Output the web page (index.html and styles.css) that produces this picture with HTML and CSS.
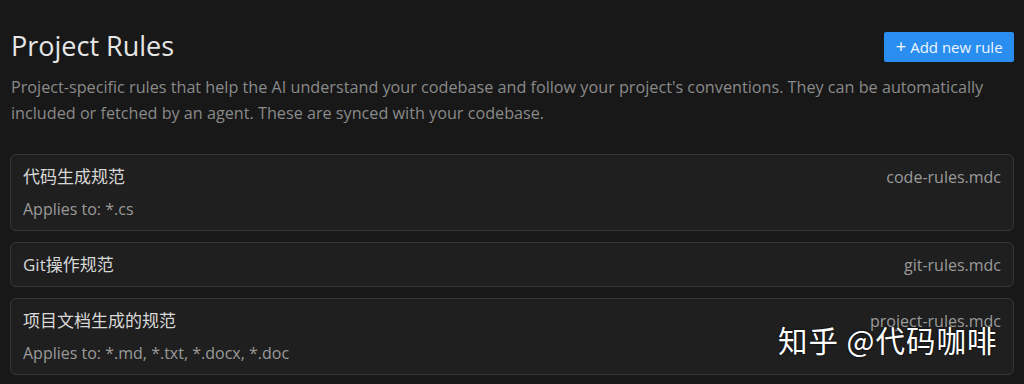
FILE: index.html
```html
<!DOCTYPE html>
<html lang="zh-CN">
<head>
    <meta charset="UTF-8">
    <meta name="viewport" content="width=device-width, initial-scale=1.0">
    <title>Project Rules</title>
    <link rel="stylesheet" href="styles.css">
</head>
<body>
    <div class="page">
        <div class="header">
            <h1>Project Rules</h1>
            <button class="add-btn"><span class="plus">+</span> Add new rule</button>
        </div>
        <p class="desc">Project-specific rules that help the AI understand your codebase and follow your project's conventions. They can be automatically included or fetched by an agent. These are synced with your codebase.</p>

        <div class="rules">
            <div class="rule">
                <div class="rule-top">
                    <span class="rule-name">代码生成规范</span>
                    <span class="rule-file">code-rules.mdc</span>
                </div>
                <div class="rule-glob">Applies to: *.cs</div>
            </div>
            <div class="rule">
                <div class="rule-top">
                    <span class="rule-name">Git操作规范</span>
                    <span class="rule-file">git-rules.mdc</span>
                </div>
            </div>
            <div class="rule">
                <div class="rule-top">
                    <span class="rule-name">项目文档生成的规范</span>
                    <span class="rule-file">project-rules.mdc</span>
                </div>
                <div class="rule-glob">Applies to: *.md, *.txt, *.docx, *.doc</div>
            </div>
        </div>
    </div>

    <!-- 水印 -->
    <div class="watermark">知乎 @代码咖啡</div>
</body>
</html>
```

FILE: styles.css
```css
body {
    margin: 0;
    padding: 0;
    background: #181818;
    font-family: 'Open Sans', 'Noto Sans CJK SC', sans-serif;
    color: #cccccc;
    overflow: hidden;
}
.page {
    padding: 26px 10px 0 10px;
}
.header {
    display: flex;
    justify-content: space-between;
    align-items: center;
}
h1 {
    margin: 0 0 0 1px;
    font-size: 27px;
    font-weight: 400;
    color: #e6e6e6;
    line-height: 40px;
}
.add-btn {
    background: #2a8ef0;
    color: #eef5ff;
    border: none;
    border-radius: 2px;
    height: 30px;
    width: 130px;
    padding: 0;
    font-family: 'Open Sans', sans-serif;
    font-size: 15px;
    margin-top: 2px;
}
.plus {
    font-size: 19px;
    line-height: 15px;
}
.desc {
    margin: 8px 0 0 1px;
    font-size: 16.2px;
    line-height: 26px;
    color: #8a8a8a;
}
.rules {
    margin-top: 28px;
    display: flex;
    flex-direction: column;
    gap: 11px;
}
.rule {
    background: #1f1f1f;
    border: 1px solid #353535;
    border-radius: 6px;
    padding: 10px 12px 9px 12px;
}
.rule-top {
    display: flex;
    justify-content: space-between;
    line-height: 24px;
}
.rule-name {
    font-size: 17px;
    color: #d8d8d8;
}
.rule-file {
    font-size: 16px;
    color: #9a9a9a;
}
.rule-glob {
    margin-top: 8px;
    font-size: 16px;
    line-height: 24px;
    color: #9a9a9a;
}
.watermark {
    position: absolute;
    left: 778px;
    top: 318px;
    font-family: 'Noto Sans CJK SC', sans-serif;
    font-size: 29.5px;
    color: #ffffff;
    letter-spacing: 1px;
    text-shadow: 0 0 2px #000;
}
```
